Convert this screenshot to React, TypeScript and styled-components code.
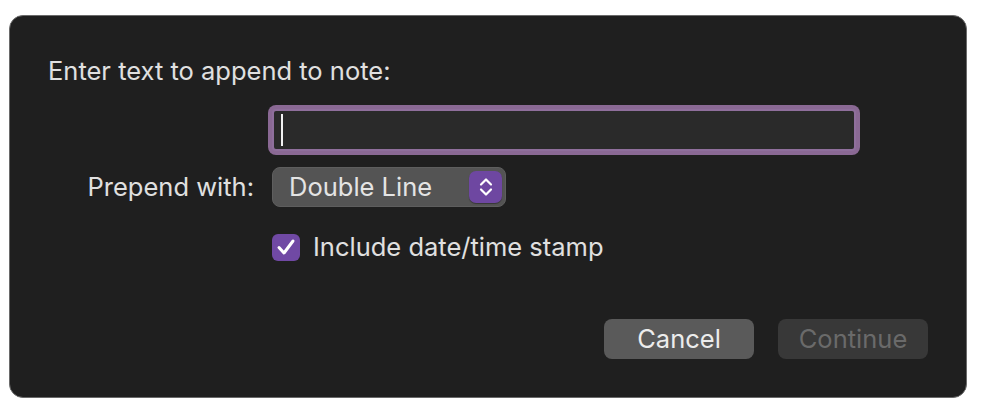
import React from 'react'
import styled, { createGlobalStyle } from 'styled-components'

const GlobalStyle = createGlobalStyle`
  html, body {
    margin: 0;
    padding: 0;
    background: #ffffff;
  }
  body {
    font-family: Inter, "Noto Sans", "Liberation Sans", sans-serif;
  }
`

const Page = styled.div`
  width: 984px;
  height: 414px;
  padding: 15px 0 0 9px;
  box-sizing: border-box;
`

const Dialog = styled.div`
  width: 958px;
  height: 383px;
  box-sizing: border-box;
  background: #1f1f1f;
  border: 1px solid #6a6a6a;
  border-radius: 14px;
  padding: 0 38px;
  display: flex;
  flex-direction: column;
  color: #e0e0e0;
  font-size: 25.5px;
  line-height: 30px;
`

const Title = styled.div`
  margin-top: 39px;
  line-height: 32px;
`

const Form = styled.div`
  display: grid;
  grid-template-columns: 206px 584px;
  column-gap: 18px;
  margin-top: 22px;
  align-items: center;
`

const Label = styled.div`
  text-align: right;
`

const Field = styled.div`
  grid-column: 2;
  height: 42px;
  box-sizing: border-box;
  background: #2a2a2a;
  border: 2px solid #8f6f9c;
  border-radius: 4px;
  box-shadow: 0 0 0 4px #8a6994;
  display: flex;
  align-items: center;
  padding-left: 7px;
`

const Caret = styled.div`
  width: 2px;
  height: 32px;
  background: #f2f2f2;
`

const PopupButton = styled.div`
  width: 234px;
  height: 40px;
  box-sizing: border-box;
  margin-top: 16px;
  background: #545454;
  border: 1px solid #5e5e5e;
  border-radius: 8px;
  display: flex;
  align-items: center;
  justify-content: space-between;
  padding: 0 3px 0 16px;
  color: #e4e4e4;
`

const Stepper = styled.div`
  width: 33px;
  height: 32px;
  border-radius: 7px;
  background: #6e47a1;
  display: flex;
  align-items: center;
  justify-content: center;
  box-shadow: 0 1px 1px rgba(0, 0, 0, 0.35);
`

const PopupLabel = styled(Label)`
  margin-top: 16px;
`

const CheckRow = styled.div`
  grid-column: 2;
  margin-top: 26px;
  height: 28px;
  display: flex;
  align-items: center;
  gap: 13px;
`

const Checkbox = styled.div`
  width: 28px;
  height: 27px;
  border-radius: 6px;
  background: #7049a4;
  display: flex;
  align-items: center;
  justify-content: center;
`

const Buttons = styled.div`
  display: flex;
  justify-content: flex-end;
  gap: 24px;
  margin-top: 58px;
`

const Button = styled.div<{ disabled?: boolean }>`
  width: 150px;
  height: 40px;
  border-radius: 8px;
  background: ${p => (p.disabled ? '#383838' : '#5a5a5a')};
  color: ${p => (p.disabled ? '#6a6a6a' : '#ececec')};
  display: flex;
  align-items: center;
  justify-content: center;
`

const App: React.FC = () => {
  return (
    <Page>
      <GlobalStyle />
      <Dialog>
        <Title>Enter text to append to note:</Title>
        <Form>
          <Field>
            <Caret />
          </Field>
          <PopupLabel>Prepend with:</PopupLabel>
          <PopupButton>
            <span>Double Line</span>
            <Stepper>
              <svg width='16' height='24' viewBox='0 0 16 24' fill='none'>
                <path
                  d='M3 9.5 L8 4.5 L13 9.5 M3 14.5 L8 19.5 L13 14.5'
                  stroke='#ffffff'
                  strokeWidth='2.2'
                  strokeLinecap='round'
                  strokeLinejoin='round'
                />
              </svg>
            </Stepper>
          </PopupButton>
          <CheckRow>
            <Checkbox>
              <svg width='20' height='18' viewBox='0 0 20 18' fill='none'>
                <path
                  d='M3 9.5 L8 15 L17 3'
                  stroke='#ffffff'
                  strokeWidth='3'
                  strokeLinecap='round'
                  strokeLinejoin='round'
                />
              </svg>
            </Checkbox>
            <span>Include date/time stamp</span>
          </CheckRow>
        </Form>
        <Buttons>
          <Button>Cancel</Button>
          <Button disabled>Continue</Button>
        </Buttons>
      </Dialog>
    </Page>
  )
}

export default App
